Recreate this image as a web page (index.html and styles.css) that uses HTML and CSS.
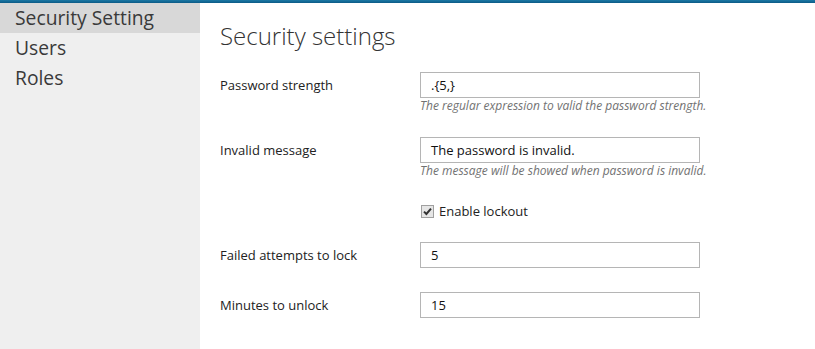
FILE: index.html
```html
<!DOCTYPE html>
<html>
<head>
<meta charset="utf-8">
<link rel="stylesheet" href="styles.css">
</head>
<body>
<div class="topbar"></div>
<div class="layout">
  <nav class="sidebar">
    <div class="nav-item active">Security Setting</div>
    <div class="nav-item">Users</div>
    <div class="nav-item">Roles</div>
  </nav>
  <main class="content">
    <h1 class="title">Security settings</h1>
    <div class="row">
      <label class="label">Password strength</label>
      <div class="field">
        <div class="input">.{5,}</div>
        <div class="help">The regular expression to valid the password strength.</div>
      </div>
    </div>
    <div class="row">
      <label class="label">Invalid message</label>
      <div class="field">
        <div class="input">The password is invalid.</div>
        <div class="help">The message will be showed when password is invalid.</div>
      </div>
    </div>
    <div class="row check-row">
      <span class="label"></span>
      <div class="field check-field">
        <span class="checkbox"><svg width="11" height="11" viewBox="0 0 11 11"><path d="M2 5.6 L4.4 8 L9 2.6" fill="none" stroke="#333" stroke-width="2"/></svg></span>
        <span class="check-text">Enable lockout</span>
      </div>
    </div>
    <div class="row">
      <label class="label">Failed attempts to lock</label>
      <div class="field">
        <div class="input">5</div>
      </div>
    </div>
    <div class="row">
      <label class="label">Minutes to unlock</label>
      <div class="field">
        <div class="input">15</div>
      </div>
    </div>
  </main>
</div>
</body>
</html>
```
FILE: styles.css
```css
html, body {
  margin: 0;
  padding: 0;
  height: 100%;
  background: #fff;
  font-family: "Open Sans", "Noto Sans", sans-serif;
  color: #222;
}
.topbar {
  height: 3px;
  background: linear-gradient(#1c79a6, #0c5b86);
}
.layout {
  display: flex;
  height: calc(100% - 3px);
}
.sidebar {
  width: 200px;
  flex: none;
  background: #efefef;
}
.nav-item {
  height: 30px;
  line-height: 30px;
  font-size: 19.3px;
  padding-left: 15px;
  color: #3a3a3a;
}
.nav-item.active {
  background: #d8d8d8;
}
.content {
  flex: 1;
  padding: 17px 0 0 20px;
}
.title {
  margin: 0 0 20px 0;
  font-size: 24px;
  font-weight: 300;
  line-height: 32px;
  color: #333;
}
.row {
  display: grid;
  grid-template-columns: 200px 280px;
  margin-bottom: 24px;
}
.label {
  font-size: 13px;
  line-height: 26px;
  height: 26px;
  color: #222;
}
.input {
  box-sizing: border-box;
  height: 26px;
  border: 1px solid #b5b5b5;
  padding: 0 10px;
  font-size: 13px;
  line-height: 24px;
  color: #111;
}
.help {
  font-size: 12px;
  font-style: italic;
  line-height: 15px;
  color: #727272;
  white-space: nowrap;
}
.check-row {
  margin-top: 0;
  margin-bottom: 22px;
}
.check-row .label {
  height: 18px;
}
.check-field {
  display: flex;
  align-items: center;
  height: 18px;
}
.checkbox {
  box-sizing: border-box;
  width: 13px;
  height: 13px;
  margin-left: 1px;
  border: 1px solid #a0a0a0;
  background: #e6e6e6;
  display: flex;
  align-items: center;
  justify-content: center;
}
.check-text {
  margin-left: 5px;
  font-size: 13px;
  color: #222;
}
```
